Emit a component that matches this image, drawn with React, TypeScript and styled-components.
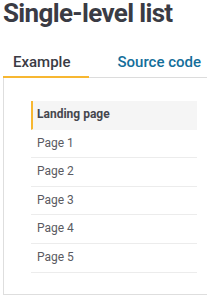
import React from "react";
import styled, { createGlobalStyle } from "styled-components";

const Global = createGlobalStyle`
  html, body { margin: 0; padding: 0; background: #fff; }
  body { font-family: "Roboto", "Liberation Sans", sans-serif; }
`;

const Page = styled.div`
  padding: 0 0 0 3px;
  width: 204px;
`;

const Title = styled.h1`
  margin: 0;
  font-size: 26px;
  line-height: 27px;
  font-weight: 700;
  color: #3a3b44;
  white-space: nowrap;
  letter-spacing: -0.65px;
`;

const Example = styled.section`
  margin-top: 26px;
  width: 204px;
  overflow: hidden;
`;

const Tabs = styled.div`
  display: flex;
  border-bottom: 1px solid #dcdcdc;
  width: 240px;
`;

const Tab = styled.div<{ $active?: boolean; $pl: number; $pr: number }>`
  padding: 0 ${(p) => p.$pr}px 5px ${(p) => p.$pl}px;
  font-size: 15px;
  line-height: 18px;
  font-weight: 500;
  color: ${(p) => (p.$active ? "#3a3b44" : "#136e9a")};
  border-bottom: 2px solid ${(p) => (p.$active ? "#f7b731" : "transparent")};
  margin-bottom: -1px;
  white-space: nowrap;
`;

const Panel = styled.div`
  border: 1px solid #dedede;
  border-top: none;
  width: 240px;
  padding: 23px 0 21px 27px;
  box-sizing: border-box;
`;

const List = styled.ul`
  list-style: none;
  margin: 0;
  padding: 0;
  width: 166px;
`;

const Item = styled.li<{ $current?: boolean }>`
  font-size: 12px;
  line-height: 15.6px;
  padding: 6px 6px 6px ${(p) => (p.$current ? 4 : 6)}px;
  border-left: ${(p) => (p.$current ? "2px solid #f7b731" : "none")};
  background: ${(p) => (p.$current ? "#f5f5f5" : "transparent")};
  border-bottom: 1px solid ${(p) => (p.$current ? "#f5f5f5" : "#ececec")};
  font-weight: ${(p) => (p.$current ? 700 : 400)};
  color: ${(p) => (p.$current ? "#45464e" : "#5a5b62")};
`;

const pages = ["Page 1", "Page 2", "Page 3", "Page 4", "Page 5"];

export default function App() {
  return (
    <>
      <Global />
      <Page>
        <Title>Single-level list</Title>
        <Example>
          <Tabs>
            <Tab $active $pl={10} $pr={19}>Example</Tab>
            <Tab $pl={28} $pr={10}>Source code</Tab>
          </Tabs>
          <Panel>
            <List>
              <Item $current>Landing page</Item>
              {pages.map((p) => (
                <Item key={p}>{p}</Item>
              ))}
            </List>
          </Panel>
        </Example>
      </Page>
    </>
  );
}
